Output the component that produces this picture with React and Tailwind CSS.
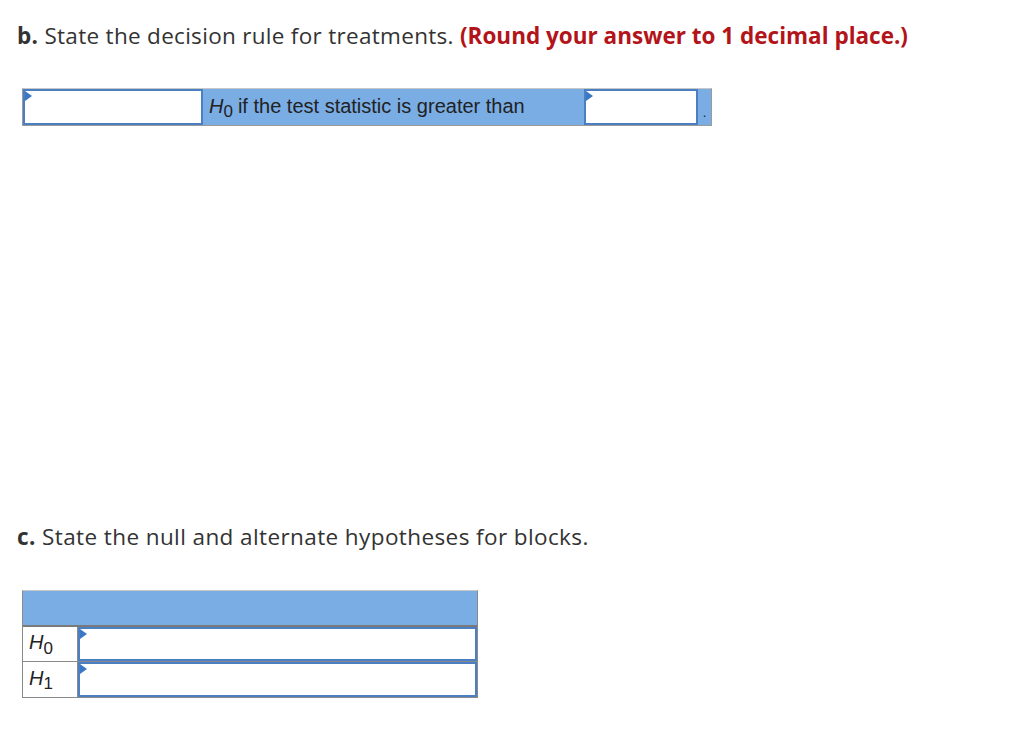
import React from 'react';

// Small blue triangle that marks an answer box
const Marker = () => (
  <svg width="7" height="10" viewBox="0 0 7 10" className="absolute left-0 top-0">
    <path d="M0 0 L7 5 L0 10 Z" fill="#3a78c6" />
  </svg>
);

const AnswerBox = ({ className = '' }) => (
  <div className={`relative bg-white border-2 border-[#4a7fc4] ${className}`}>
    <Marker />
  </div>
);

const Hyp = ({ sub }) => (
  <span className="font-['Liberation_Sans',sans-serif]">
    <i>H</i>
    <span className="relative top-[0.28em] text-[0.85em]">{sub}</span>
  </span>
);

const App = () => {
  return (
    <div className="min-h-[755px] bg-white pl-[17px] pt-[22px] font-['Open_Sans',sans-serif] text-[#333]">
      <h2 className="text-[22.5px] leading-[28px] tracking-[0.3px]">
        <b>b.</b> State the decision rule for treatments.{' '}
        <b className="text-[#b3141a] tracking-[0px]">(Round your answer to 1 decimal place.)</b>
      </h2>

      {/* decision rule row */}
      <div className="mt-[38px] ml-[5px] flex w-[690px] h-[38px] border border-[#9a9a9a] border-t-[#c8c8c8] bg-[#79ade4]">
        <AnswerBox className="w-[180px] h-full" />
        <div className="flex items-center w-[381px] pl-[6px] pb-[3px] text-[20px] text-[#222] font-['Liberation_Sans',sans-serif]">
          <Hyp sub="0" />
          <span className="ml-[5px]">if the test statistic is greater than</span>
        </div>
        <AnswerBox className="w-[114px] h-full" />
        <div className="flex-1 flex items-end justify-center pb-[6px] text-[12px] leading-none text-[#222]">.</div>
      </div>

      <h2 className="mt-[397px] text-[22.5px] leading-[28px] tracking-[0.4px]">
        <b>c.</b> State the null and alternate hypotheses for blocks.
      </h2>

      {/* hypotheses table */}
      <div className="mt-[39px] ml-[5px] w-[456px] border border-[#8a8a8a] border-t-[#c8c8c8]">
        <div className="h-[36px] bg-[#79ade4] border-b-2 border-[#7a7a7a]" />
        <div className="flex h-[35px] border-b border-[#8a8a8a]">
          <div className="w-[55px] flex items-center pl-[6px] pb-[4px] border-r border-[#8a8a8a] text-[20px] text-[#222]">
            <Hyp sub="0" />
          </div>
          <AnswerBox className="flex-1 h-full" />
        </div>
        <div className="flex h-[35px]">
          <div className="w-[55px] flex items-center pl-[6px] pb-[4px] border-r border-[#8a8a8a] text-[20px] text-[#222]">
            <Hyp sub="1" />
          </div>
          <AnswerBox className="flex-1 h-full" />
        </div>
      </div>
    </div>
  );
};

export default App;
